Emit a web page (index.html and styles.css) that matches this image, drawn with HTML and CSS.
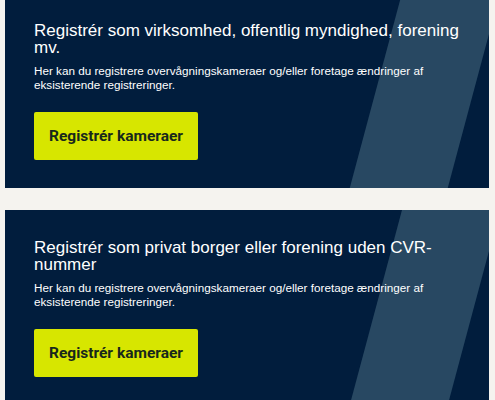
FILE: index.html
```html
<!DOCTYPE html>
<html lang="da">
<head>
  <meta charset="UTF-8" />
  <title>Registrér kameraer</title>
  <link rel="stylesheet" href="styles.css">
</head>
<body>
  <div class="page">
    <div class="card">
      <div class="card-body">
        <h2>Registrér som virksomhed, offentlig myndighed, forening mv.</h2>
        <p>Her kan du registrere overvågningskameraer og/eller foretage ændringer af eksisterende registreringer.</p>
        <a class="btn" href="#">Registrér kameraer</a>
      </div>
    </div>

    <div class="card">
      <div class="card-body">
        <h2>Registrér som privat borger eller forening uden CVR-nummer</h2>
        <p>Her kan du registrere overvågningskameraer og/eller foretage ændringer af eksisterende registreringer.</p>
        <a class="btn" href="#">Registrér kameraer</a>
      </div>
    </div>
  </div>
</body>
</html>
```

FILE: styles.css
```css
body {
  margin: 0;
  background: #f5f3ef;
  font-family: 'Liberation Sans', Arial, sans-serif;
}

.page {
  margin-top: -7px;
  padding: 0 6px 0 5px;
  display: flex;
  flex-direction: column;
  gap: 22px;
}

.card {
  position: relative;
  overflow: hidden;
  background: #011d3d;
  color: #fff;
}

/* lighter slanted band on the right */
.card::before {
  content: "";
  position: absolute;
  top: 0;
  bottom: 0;
  left: 397px;
  width: 98px;
  background: #284862;
  transform: skewX(-15deg);
  transform-origin: top left;
}

.card-body {
  position: relative;
  padding: 29px 29px 28px;
}

h2 {
  margin: 0;
  font-size: 17px;
  line-height: 17px;
  font-weight: normal;
}

p {
  margin: 8px 0 0;
  font-size: 11.7px;
  line-height: 14px;
}

.btn {
  display: inline-block;
  margin-top: 20px;
  height: 48px;
  line-height: 48px;
  padding: 0 15px;
  background: #d7e600;
  border-radius: 2px;
  color: #17281c;
  font-family: Roboto, sans-serif;
  font-weight: 700;
  font-size: 15.5px;
  text-decoration: none;
}
```
